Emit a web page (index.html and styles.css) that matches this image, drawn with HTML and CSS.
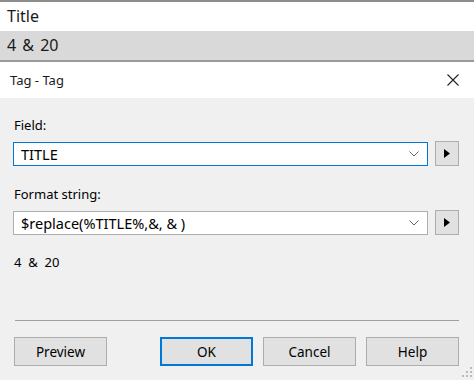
FILE: index.html
```html
<!DOCTYPE html>
<html lang="en">
<head>
    <meta charset="UTF-8">
    <title>Tag - Tag</title>
    <link rel="stylesheet" href="styles.css">
</head>
<body>
    <div class="list">
        <div class="row">Title</div>
        <div class="row selected">4 &amp; 20</div>
    </div>

    <div class="dialog">
        <div class="titlebar">
            <span>Tag - Tag</span>
            <svg class="close" width="12" height="12" viewBox="0 0 12 12">
                <path d="M0.5 0.5 L11.5 11.5 M11.5 0.5 L0.5 11.5" stroke="#222" stroke-width="1.1" fill="none"/>
            </svg>
        </div>

        <div class="content">
            <div class="label">Field:</div>
            <div class="field-row">
                <div class="combo focused">
                    <span>TITLE</span>
                    <svg class="chevron" width="10" height="6" viewBox="0 0 10 6"><path d="M0.5 0.5 L5 5 L9.5 0.5" stroke="#666" fill="none"/></svg>
                </div>
                <div class="arrow-btn"><svg width="6" height="9" viewBox="0 0 6 9"><path d="M0 0 L6 4.5 L0 9 Z" fill="#000"/></svg></div>
            </div>

            <div class="label second">Format string:</div>
            <div class="field-row">
                <div class="combo">
                    <span>$replace(%TITLE%,&amp;, &amp; )</span>
                    <svg class="chevron" width="10" height="6" viewBox="0 0 10 6"><path d="M0.5 0.5 L5 5 L9.5 0.5" stroke="#666" fill="none"/></svg>
                </div>
                <div class="arrow-btn"><svg width="6" height="9" viewBox="0 0 6 9"><path d="M0 0 L6 4.5 L0 9 Z" fill="#000"/></svg></div>
            </div>

            <div class="preview-text">4 &nbsp;&amp; &nbsp;20</div>

            <hr class="separator">

            <div class="buttons">
                <button class="btn">Preview</button>
                <div class="spacer"></div>
                <button class="btn default">OK</button>
                <button class="btn">Cancel</button>
                <button class="btn">Help</button>
            </div>
        </div>
        <svg class="grip" width="10" height="10" viewBox="0 0 10 10">
            <rect x="8" y="0" width="2" height="2" fill="#bbb"/>
            <rect x="4" y="4" width="2" height="2" fill="#bbb"/>
            <rect x="8" y="4" width="2" height="2" fill="#bbb"/>
            <rect x="0" y="8" width="2" height="2" fill="#bbb"/>
            <rect x="4" y="8" width="2" height="2" fill="#bbb"/>
            <rect x="8" y="8" width="2" height="2" fill="#bbb"/>
        </svg>
    </div>
</body>
</html>
```

FILE: styles.css
```css
body {
    margin: 0;
    font-family: "Noto Sans", "Open Sans", sans-serif;
    color: #000;
    background-color: #f0f0f0;
    width: 474px;
    height: 380px;
    overflow: hidden;
}
.list {
    border-top: 2px solid #8c8c8c;
    background-color: #fff;
}
.row {
    height: 29px;
    line-height: 29px;
    padding-left: 7px;
    font-size: 16px;
    color: #1a1a1a;
}
.row.selected {
    background-color: #d9d9d9;
    border-bottom: 2px solid #9a9a9a;
    word-spacing: 2px;
}
.dialog {
    position: relative;
    height: 317px;
}
.titlebar {
    display: flex;
    align-items: center;
    justify-content: space-between;
    height: 36px;
    padding: 0 15px 0 10px;
    background-color: #fff;
    font-size: 13px;
    color: #1a1a1a;
}
.content {
    padding: 18px 15px 0 13px;
}
.label {
    font-size: 13px;
    height: 18px;
    line-height: 18px;
    margin-bottom: 7px;
    padding-left: 1px;
}
.label.second {
    margin-top: 19px;
}
.field-row {
    display: flex;
    align-items: center;
    gap: 7px;
}
.combo {
    flex: 1;
    display: flex;
    align-items: center;
    justify-content: space-between;
    height: 24px;
    box-sizing: border-box;
    padding: 0 8px 0 7px;
    background-color: #fff;
    border: 1px solid #adadad;
    font-size: 14.5px;
}
.combo.focused {
    border-color: #0078d7;
}
.arrow-btn {
    width: 24px;
    height: 25px;
    box-sizing: border-box;
    border: 1px solid #adadad;
    background-color: #e1e1e1;
    display: flex;
    align-items: center;
    justify-content: center;
}
.preview-text {
    font-size: 13px;
    margin-top: 18px;
    height: 18px;
    line-height: 18px;
    padding-left: 1px;
    white-space: pre;
}
.separator {
    border: none;
    border-top: 1px solid #a0a0a0;
    margin: 49px 0 0 2px;
}
.buttons {
    display: flex;
    gap: 10px;
    margin-top: 16px;
    padding-left: 1px;
}
.spacer {
    flex: 1;
}
.btn {
    width: 93px;
    height: 29px;
    box-sizing: border-box;
    border: 1px solid #adadad;
    background-color: #e1e1e1;
    font-family: "Noto Sans", "Open Sans", sans-serif;
    font-size: 13.5px;
    color: #000;
    padding: 0;
}
.btn.default {
    border: 2px solid #0078d7;
    margin-left: 2px;
}
.grip {
    position: absolute;
    right: 2px;
    bottom: 2px;
}
```
